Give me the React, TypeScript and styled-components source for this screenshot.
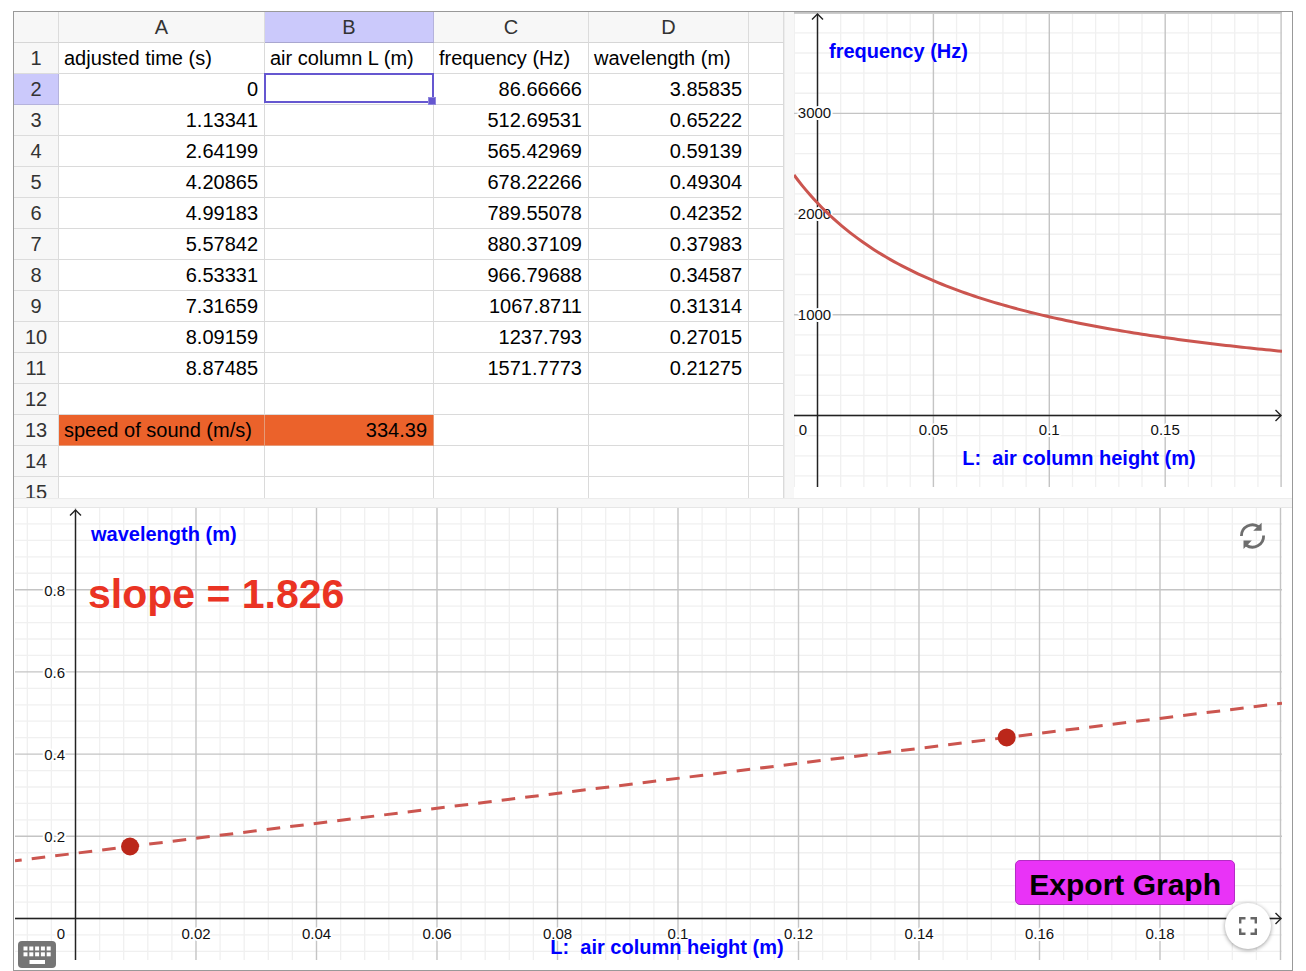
import React from "react";
import styled, { createGlobalStyle, css } from "styled-components";

const GlobalStyle = createGlobalStyle`
  *, *::before, *::after { box-sizing: border-box; }
  body {
    margin: 0;
    background: #fff;
    color: #000;
    font-family: "Liberation Sans", Arial, Helvetica, sans-serif;
  }
`;

/* ---------- layout ---------- */

const Page = styled.main`
  padding: 11px 13px 0;
`;

const Applet = styled.div`
  border: 1px solid #999;
  background: #fff;
`;

const TopRow = styled.div`
  display: grid;
  grid-template-columns: minmax(0, 770fr) 10px minmax(0, 498fr);
`;

const SheetPane = styled.section`
  height: 486px;
  overflow: hidden;
`;

const Divider = styled.div<{ $horizontal?: boolean }>`
  background: #f7f7f7;
  ${({ $horizontal }) =>
    $horizontal
      ? css`
          height: 10px;
          border-top: 1px solid #ececec;
          border-bottom: 1px solid #e6e6e6;
        `
      : css`
          border-left: 1px solid #ececec;
        `}
`;

const GraphPane = styled.section`
  position: relative;
  padding: 0 10px 10px 0;
`;

const LowerGraphPane = styled(GraphPane)`
  padding-left: 1px;
`;

/* ---------- spreadsheet ---------- */

const Sheet = styled.table`
  width: 100%;
  table-layout: fixed;
  border-collapse: separate;
  border-spacing: 0;
  font-size: 20px;
  line-height: 30px;
`;

const headerCell = css<{ $active?: boolean }>`
  padding: 0;
  font-weight: 400;
  text-align: center;
  color: #333;
  background: ${({ $active }) => ($active ? "#cbc9fb" : "#f7f7f7")};
  border-right: 1px solid ${({ $active }) => ($active ? "#b5b3dc" : "#dcdcdc")};
  border-bottom: 1px solid ${({ $active }) => ($active ? "#a9a7cf" : "#d6d6d6")};
`;

const ColumnHeader = styled.th<{ $active?: boolean }>`
  ${headerCell}
  height: 31px;
`;

const RowHeader = styled.th<{ $active?: boolean }>`
  ${headerCell}
  height: 31px;
  border-bottom-color: ${({ $active }) => ($active ? "#b5b3dc" : "#dcdcdc")};
`;

const Cell = styled.td<{ $numeric?: boolean; $filled?: boolean }>`
  position: relative;
  height: 31px;
  padding: 0 6px 0 5px;
  white-space: nowrap;
  text-align: ${({ $numeric }) => ($numeric ? "right" : "left")};
  background: ${({ $filled }) => ($filled ? "#eb622b" : "#fff")};
  border-right: 1px solid ${({ $filled }) => ($filled ? "#e59a78" : "#dadada")};
  border-bottom: 1px solid ${({ $filled }) => ($filled ? "#e59a78" : "#dadada")};
`;

const Selection = styled.span`
  position: absolute;
  z-index: 1;
  inset: -1px -1px 1px -1px;
  border: 2px solid #6557d0;

  &::after {
    content: "";
    position: absolute;
    right: -4px;
    bottom: -4px;
    width: 8px;
    height: 8px;
    background: #6557d0;
    border: 1px solid #8f86dc;
  }
`;

const columns = [
  { name: "A", width: 206 },
  { name: "B", width: 169 },
  { name: "C", width: 155 },
  { name: "D", width: 160 },
  { name: "", width: 35 },
];

const sheetRows: string[][] = [
  ["adjusted time (s)", "air column L (m)", "frequency (Hz)", "wavelength (m)", ""],
  ["0", "", "86.66666", "3.85835", ""],
  ["1.13341", "", "512.69531", "0.65222", ""],
  ["2.64199", "", "565.42969", "0.59139", ""],
  ["4.20865", "", "678.22266", "0.49304", ""],
  ["4.99183", "", "789.55078", "0.42352", ""],
  ["5.57842", "", "880.37109", "0.37983", ""],
  ["6.53331", "", "966.79688", "0.34587", ""],
  ["7.31659", "", "1067.8711", "0.31314", ""],
  ["8.09159", "", "1237.793", "0.27015", ""],
  ["8.87485", "", "1571.7773", "0.21275", ""],
  ["", "", "", "", ""],
  ["speed of sound (m/s)", "334.39", "", "", ""],
  ["", "", "", "", ""],
  ["", "", "", "", ""],
];

function Spreadsheet() {
  return (
    <Sheet>
      <colgroup>
        <col width={45} />
        {columns.map((c, i) => (
          <col key={i} width={c.width} />
        ))}
      </colgroup>
      <thead>
        <tr>
          <ColumnHeader />
          {columns.map((c, i) => (
            <ColumnHeader key={i} scope="col" $active={c.name === "B"}>
              {c.name}
            </ColumnHeader>
          ))}
        </tr>
      </thead>
      <tbody>
        {sheetRows.map((cells, r) => (
          <tr key={r}>
            <RowHeader scope="row" $active={r === 1}>
              {r + 1}
            </RowHeader>
            {cells.map((value, c) => (
              <Cell key={c} $numeric={/^[\d.]+$/.test(value)} $filled={r === 12 && c < 2}>
                {value}
                {r === 1 && c === 1 && <Selection />}
              </Cell>
            ))}
          </tr>
        ))}
      </tbody>
    </Sheet>
  );
}

/* ---------- graphs ---------- */

const Plot = styled.svg`
  display: block;
  width: 100%;
  height: auto;
`;

const TickLabel = styled.text`
  font-size: 15px;
  fill: #111;
  stroke: #fff;
  stroke-width: 4px;
  paint-order: stroke;
  stroke-linejoin: round;
`;

const AxisTitle = styled.text`
  font-size: 20px;
  font-weight: 700;
  fill: #0000ff;
  white-space: pre;
`;

const SlopeLabel = styled.text`
  font-size: 41px;
  font-weight: 700;
  fill: #ea3323;
`;

type GridProps = {
  width: number;
  height: number;
  originX: number;
  originY: number;
  stepX: number;
  stepY: number;
};

/* Every fifth line is a major one. */
function Grid({ width, height, originX, originY, stepX, stepY }: GridProps) {
  const lines: { key: string; major: boolean; d: string }[] = [];
  for (let i = Math.ceil(-originX / stepX); originX + i * stepX <= width; i++) {
    const x = originX + i * stepX;
    lines.push({ key: `x${i}`, major: i % 5 === 0, d: `M${x} 0V${height}` });
  }
  for (let i = Math.ceil((originY - height) / stepY); originY - i * stepY >= 0; i++) {
    const y = originY - i * stepY;
    lines.push({ key: `y${i}`, major: i % 5 === 0, d: `M0 ${y}H${width}` });
  }
  lines.sort((a, b) => Number(a.major) - Number(b.major));
  return (
    <g fill="none">
      {lines.map((l) => (
        <path
          key={l.key}
          d={l.d}
          stroke={l.major ? "#c4c4c4" : "#f0f0f0"}
          strokeWidth={l.major ? 1.4 : 1.3}
        />
      ))}
    </g>
  );
}

type AxesProps = Omit<GridProps, "stepX" | "stepY">;

function Axes({ width, height, originX, originY }: AxesProps) {
  return (
    <g fill="none" stroke="#222" strokeWidth={1.4}>
      <path d={`M${originX} 2V${height}`} />
      <path d={`M${originX - 5.5} 7.5L${originX} 2L${originX + 5.5} 7.5`} />
      <path d={`M0 ${originY}H${width - 1}`} />
      <path d={`M${width - 6.5} ${originY - 5.5}L${width - 1} ${originY}L${width - 6.5} ${originY + 5.5}`} />
    </g>
  );
}

const speedOfSound = 334.39;
const slope = 1.826;
const intercept = 0.1585;

function FrequencyGraph() {
  const frame = { width: 488, height: 475, originX: 23.5, originY: 403.5 };
  const unitX = 2318;
  const unitY = 0.1007;
  const points: string[] = [];
  for (let x = 0; x <= frame.width; x += 4) {
    const length = (x - frame.originX) / unitX;
    const f = speedOfSound / (slope * length + intercept);
    points.push(`${x},${(frame.originY - f * unitY).toFixed(2)}`);
  }
  return (
    <Plot viewBox={`0 0 ${frame.width} ${frame.height}`} role="img" aria-label="Frequency graph">
      <Grid {...frame} stepX={unitX * 0.01} stepY={unitY * 200} />
      <path d={`M0 1.5H${frame.width}`} stroke="#ccc" />
      <Axes {...frame} />
      <g textAnchor="middle">
        {[1000, 2000, 3000].map((v) => (
          <TickLabel key={v} x={20.5} y={frame.originY - v * unitY + 5}>
            {v}
          </TickLabel>
        ))}
        <TickLabel x={9} y={423}>0</TickLabel>
        {[0.05, 0.1, 0.15].map((v) => (
          <TickLabel key={v} x={frame.originX + v * unitX} y={423}>
            {v}
          </TickLabel>
        ))}
      </g>
      <polyline points={points.join(" ")} fill="none" stroke="#cb554f" strokeWidth={3} />
      <AxisTitle x={35} y={46}>frequency (Hz)</AxisTitle>
      <AxisTitle x={285} y={453} textAnchor="middle">{"L:  air column height (m)"}</AxisTitle>
    </Plot>
  );
}

function WavelengthGraph() {
  const frame = { width: 1267, height: 452, originX: 60.5, originY: 410.5 };
  const unitX = 6025;
  const unitY = 411;
  return (
    <Plot viewBox={`0 0 ${frame.width} ${frame.height}`} role="img" aria-label="Wavelength graph">
      <Grid {...frame} stepX={unitX * 0.004} stepY={unitY * 0.04} />
      <Axes {...frame} />
      <g textAnchor="end">
        {[0.2, 0.4, 0.6, 0.8].map((v) => (
          <TickLabel key={v} x={50} y={frame.originY - v * unitY + 6}>
            {v}
          </TickLabel>
        ))}
        <TickLabel x={50} y={431}>0</TickLabel>
      </g>
      <g textAnchor="middle">
        {[0.02, 0.04, 0.06, 0.08, 0.1, 0.12, 0.14, 0.16, 0.18].map((v) => (
          <TickLabel key={v} x={frame.originX + v * unitX} y={431}>
            {v}
          </TickLabel>
        ))}
      </g>
      <path
        d="M0 352.8L1267 195.2"
        stroke="#cb554f"
        strokeWidth={3}
        strokeDasharray="13.6 10.08"
        strokeDashoffset={6.85}
      />
      <circle cx={115} cy={338.5} r={9} fill="#bb271a" />
      <circle cx={991.7} cy={229.4} r={9} fill="#bb271a" />
      <AxisTitle x={76} y={33}>wavelength (m)</AxisTitle>
      <SlopeLabel x={73} y={100}>slope = 1.826</SlopeLabel>
      <AxisTitle x={652} y={446} textAnchor="middle">{"L:  air column height (m)"}</AxisTitle>
    </Plot>
  );
}

/* ---------- overlay controls ---------- */

const IconButton = styled.button`
  position: absolute;
  display: flex;
  align-items: center;
  justify-content: center;
  padding: 0;
  border: 0;
  background: none;
  cursor: pointer;
`;

const ResetButton = styled(IconButton)`
  top: 13px;
  right: 25px;
  width: 30px;
  height: 30px;
`;

const KeyboardButton = styled(IconButton)`
  left: 4px;
  bottom: 2px;
  width: 38px;
  height: 27px;
  border-radius: 4px;
  background: #757575;
`;

const FullscreenButton = styled(IconButton)`
  right: 21px;
  bottom: 21px;
  width: 46px;
  height: 46px;
  border-radius: 50%;
  background: #fff;
  box-shadow: 0 1px 4px rgba(0, 0, 0, 0.4);
`;

const ExportButton = styled.button`
  position: absolute;
  right: 57px;
  bottom: 65px;
  height: 45px;
  padding: 4px 13px 0;
  border: 1px solid #b32cc4;
  border-radius: 5px;
  background: #e933f7;
  color: #000;
  font: 700 30px/39px "Liberation Sans", Arial, Helvetica, sans-serif;
  white-space: nowrap;
  cursor: pointer;
`;

function ResetIcon() {
  return (
    <svg width="30" height="30" viewBox="0 0 30 30" aria-hidden="true">
      <g fill="none" stroke="#6e6e6e" strokeWidth="2.8">
        <path d="M4.400 15A11.100 11.100 0 0 1 22 6" />
        <path d="M26.600 14.500A11.100 11.100 0 0 1 9 24" />
      </g>
      <path d="M24.600 1.800V9.800H16.200z" fill="#6e6e6e" />
      <path d="M6.500 28V19.600H14.800z" fill="#6e6e6e" />
    </svg>
  );
}

function KeyboardIcon() {
  const keys = [0, 1, 2, 3, 4];
  return (
    <svg width="38" height="27" viewBox="0 0 38 27" fill="#fff" aria-hidden="true">
      {keys.map((k) => (
        <React.Fragment key={k}>
          <rect x={5.5 + k * 5.8} y="5.500" width="4" height="4" />
          <rect x={5.5 + k * 5.8} y="11.300" width="4" height="4" />
        </React.Fragment>
      ))}
      <rect x="11.500" y="19" width="15.500" height="4" />
    </svg>
  );
}

function FullscreenIcon() {
  return (
    <svg width="18" height="18" viewBox="0 0 18 18" fill="none" stroke="#666" strokeWidth="2.400" aria-hidden="true">
      <path d="M1.200 6.500V1.200H6.500M11.500 1.200H16.800V6.500M16.800 11.500V16.800H11.500M6.500 16.800H1.200V11.500" />
    </svg>
  );
}

export default function App() {
  return (
    <>
      <GlobalStyle />
      <Page>
        <Applet>
          <TopRow>
            <SheetPane aria-label="Spreadsheet">
              <Spreadsheet />
            </SheetPane>
            <Divider />
            <GraphPane>
              <FrequencyGraph />
            </GraphPane>
          </TopRow>
          <Divider $horizontal />
          <LowerGraphPane>
            <WavelengthGraph />
            <ResetButton type="button" aria-label="Reset">
              <ResetIcon />
            </ResetButton>
            <ExportButton type="button">Export Graph</ExportButton>
            <KeyboardButton type="button" aria-label="Keyboard">
              <KeyboardIcon />
            </KeyboardButton>
            <FullscreenButton type="button" aria-label="Fullscreen">
              <FullscreenIcon />
            </FullscreenButton>
          </LowerGraphPane>
        </Applet>
      </Page>
    </>
  );
}
